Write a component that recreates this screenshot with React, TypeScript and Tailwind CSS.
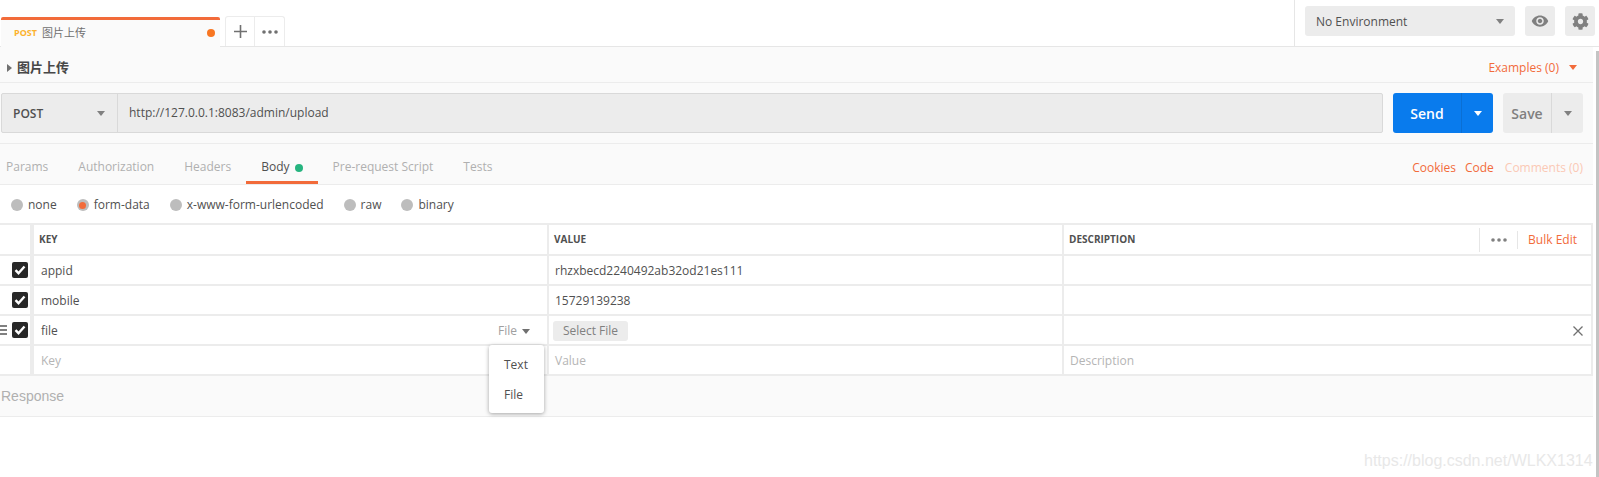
import { FaCog } from 'react-icons/fa';
import { MdVisibility } from 'react-icons/md';

const Caret = ({ className }: { className: string }) => (
  <svg className={className} width="8" height="5" viewBox="0 0 8 5">
    <path d="M0 0h8L4 5z" fill="currentColor" />
  </svg>
);

const Dots = ({ className }: { className: string }) => (
  <svg className={className} width="16" height="4" viewBox="0 0 16 4">
    <circle cx="2" cy="2" r="1.8" fill="currentColor" />
    <circle cx="8" cy="2" r="1.8" fill="currentColor" />
    <circle cx="14" cy="2" r="1.8" fill="currentColor" />
  </svg>
);

const CheckBox = () => (
  <div className="w-4 h-4 rounded-[2px] bg-[#282828] flex items-center justify-center">
    <svg width="12" height="10" viewBox="0 0 12 10">
      <path d="M1.5 5.2 4.5 8.2 10.5 1.5" fill="none" stroke="#fff" strokeWidth="2.4" />
    </svg>
  </div>
);

const Row = ({
  check,
  handle,
  keyCell,
  valueCell,
  descCell
}: {
  check?: boolean;
  handle?: boolean;
  keyCell: React.ReactNode;
  valueCell: React.ReactNode;
  descCell?: React.ReactNode;
}) => (
  <div className="flex h-[30px] border-b-2 border-[#ececec]">
    <div className="w-[30px] flex items-center">
      <div className="w-3 shrink-0">
        {handle && (
          <div className="w-[7px] flex flex-col gap-[2px]">
            <div className="h-[2px] bg-[#808080]" />
            <div className="h-[2px] bg-[#808080]" />
            <div className="h-[2px] bg-[#808080]" />
          </div>
        )}
      </div>
      {check && <CheckBox />}
    </div>
    <div className="w-[519px] border-l-4 border-r-2 border-[#ececec] pl-[7px] pt-[2px] flex items-center relative">{keyCell}</div>
    <div className="w-[515px] border-r-2 border-[#ececec] pl-[6px] pt-[2px] flex items-center">{valueCell}</div>
    <div className="w-[529px] border-r-2 border-[#ececec] pl-[6px] pt-[2px] flex items-center">{descCell}</div>
  </div>
);

const Radio = ({ label, active }: { label: string; active?: boolean }) => (
  <div className="flex items-center gap-[5px]">
    <div className="w-3 h-3 rounded-full bg-[#bdbdbd] flex items-center justify-center">
      {active && <div className="w-[7px] h-[7px] rounded-full bg-[#f26b3a]" />}
    </div>
    <span>{label}</span>
  </div>
);

export default function App() {
  return (
    <div className="w-[1599px] h-[477px] bg-white overflow-hidden relative flex flex-col text-xs text-[#505050] font-['Open_Sans','Noto_Sans_CJK_SC',sans-serif]">
      {/* tab bar */}
      <div className="h-[47px] shrink-0 flex border-b border-[#e6e6e6]">
        <div className="flex-1 flex items-end pl-[1px]">
          <div className="w-[219px] h-[30px] -mb-[1px] bg-[#fafafa] border-t-[3px] border-[#f26b3a] flex items-center pl-[13px] pr-[5px] pb-[1px] rounded-t-[2px]">
            <span className="text-[9px] font-bold text-[#fcb22c] w-[28px]">POST</span>
            <span className="text-[11px] text-[#707070]">图片上传</span>
            <div className="ml-auto w-2 h-2 rounded-full bg-[#f87622]" />
          </div>
          <div className="ml-[5px] h-[30px] flex border border-b-0 border-[#ececec] rounded-t-[3px]">
            <div className="w-[29px] flex items-center justify-center border-r border-[#ececec]">
              <svg width="13" height="13" viewBox="0 0 13 13">
                <path d="M6.5 0v13M0 6.5h13" stroke="#707070" strokeWidth="1.6" />
              </svg>
            </div>
            <div className="w-[29px] flex items-center justify-center">
              <Dots className="text-[#707070]" />
            </div>
          </div>
        </div>
        <div className="w-[305px] border-l border-[#e6e6e6] flex items-start pt-[6px] pl-[10px] gap-[10px]">
          <div className="w-[210px] h-[30px] rounded-[3px] bg-[#ececec] flex items-center pl-[11px] pr-[11px] pt-[1px] justify-between">
            <span>No Environment</span>
            <Caret className="text-[#808080]" />
          </div>
          <div className="w-[30px] h-[30px] rounded-[3px] bg-[#ececec] flex items-center justify-center">
            <MdVisibility size={18} color="#808080" />
          </div>
          <div className="w-[30px] h-[30px] rounded-[3px] bg-[#ececec] flex items-center justify-center">
            <FaCog size={17} color="#808080" />
          </div>
        </div>
      </div>

      <div className="flex-1 flex min-h-0">
        <div className="w-[1593px] shrink-0 flex flex-col">
          {/* request name */}
          <div className="h-[36px] shrink-0 bg-[#fafafa] border-b border-[#ececec] flex items-center pl-[7px] pr-[16px] pt-[6px]">
            <svg width="5" height="8" viewBox="0 0 5 8" className="mr-[5px]">
              <path d="M0 0v8l5-4z" fill="#707070" />
            </svg>
            <span className="text-[13px] font-semibold text-[#484848]">图片上传</span>
            <span className="ml-auto text-[#f26b3a]">Examples (0)</span>
            <Caret className="ml-[10px] text-[#f26b3a]" />
          </div>

          {/* url bar */}
          <div className="h-[61px] shrink-0 bg-[#fafafa] border-b border-[#ececec] pt-[10px] pl-[1px] flex items-start">
            <div className="w-[1382px] h-10 bg-[#ececec] border border-[#d9d9d9] rounded-[2px] flex">
              <div className="w-[116px] shrink-0 border-r border-[#d9d9d9] flex items-center justify-between pl-[11px] pr-3">
                <span className="font-semibold pt-[2px]">POST</span>
                <Caret className="text-[#808080]" />
              </div>
              <div className="flex-1 flex items-center pl-[11px] text-[#505050]">http://127.0.0.1:8083/admin/upload</div>
            </div>
            <div className="ml-[10px] w-[100px] h-10 rounded-[3px] bg-[#097bed] text-white flex text-sm font-semibold">
              <div className="w-[69px] flex items-center justify-center pt-[2px] border-r border-[#0a6fd4]">Send</div>
              <div className="flex-1 flex items-center justify-center">
                <Caret className="text-white" />
              </div>
            </div>
            <div className="ml-[10px] w-[80px] h-10 rounded-[3px] bg-[#ececec] text-[#808080] flex text-sm font-semibold">
              <div className="w-[49px] flex items-center justify-center pt-[2px] border-r border-[#d9d9d9]">Save</div>
              <div className="flex-1 flex items-center justify-center">
                <Caret className="text-[#808080]" />
              </div>
            </div>
          </div>

          {/* request tabs */}
          <div className="h-[41px] shrink-0 bg-[#fafafa] border-b border-[#ececec] flex items-stretch pl-[6px] pr-[10px] text-[#b0b0b0]">
            <div className="flex gap-[30px]">
              <span className="pt-[15px]">Params</span>
              <span className="pt-[15px]">Authorization</span>
              <span className="pt-[15px]">Headers</span>
              <div className="-mx-[15px] px-[15px] pt-[15px] h-[40px] border-b-[3px] border-[#f26b3a] flex items-start gap-[5px] text-[#505050]">
                <span>Body</span>
                <div className="w-2 h-2 mt-[5px] rounded-full bg-[#26b47f]" />
              </div>
              <span className="pt-[15px]">Pre-request Script</span>
              <span className="pt-[15px]">Tests</span>
            </div>
            <div className="ml-auto flex pt-[16px] text-[#f26b3a]">
              <span>Cookies</span>
              <span className="ml-[9px]">Code</span>
              <span className="ml-[11px] text-[#fbc9b5]">Comments (0)</span>
            </div>
          </div>

          {/* body type */}
          <div className="h-[38px] shrink-0 flex items-center pl-[11px] pt-[2px] gap-[20px]">
            <Radio label="none" />
            <Radio label="form-data" active />
            <Radio label="x-www-form-urlencoded" />
            <Radio label="raw" />
            <Radio label="binary" />
          </div>

          {/* form table */}
          <div className="flex h-[33px] border-y-2 border-[#ececec] text-[10px] font-bold">
            <div className="w-[30px]" />
            <div className="w-[519px] border-l-4 border-r-2 border-[#ececec] pl-[5px] flex items-center">KEY</div>
            <div className="w-[515px] border-r-2 border-[#ececec] pl-[5px] flex items-center">VALUE</div>
            <div className="w-[529px] border-r-2 border-[#ececec] pl-[5px] flex items-center relative">
              DESCRIPTION
              <div className="ml-auto h-[24px] border-l border-[#e6e6e6] w-[38px] flex items-center justify-center">
                <Dots className="text-[#808080]" />
              </div>
              <div className="h-[18px] border-l border-[#e6e6e6] pl-[10px] pr-[14px] flex items-center text-xs font-normal text-[#f26b3a]">
                Bulk Edit
              </div>
            </div>
          </div>
          <Row check keyCell="appid" valueCell="rhzxbecd2240492ab32od21es111" />
          <Row check keyCell="mobile" valueCell="15729139238" />
          <Row
            check
            handle
            keyCell={
              <>
                file
                <span className="ml-auto text-[#a0a0a0]">File</span>
                <Caret className="ml-[5px] mr-[17px] text-[#707070]" />
                <div className="absolute left-[455px] top-[29px] z-10 w-[55px] h-[68px] py-1 bg-white rounded-[3px] shadow-[0_1px_4px_rgba(0,0,0,0.35)] flex flex-col">
                  <span className="h-[30px] flex items-center pl-[15px] pt-[2px]">Text</span>
                  <span className="h-[30px] flex items-center pl-[15px] pt-[2px]">File</span>
                </div>
              </>
            }
            valueCell={
              <div className="-ml-[2px] w-[75px] h-5 rounded-[3px] bg-[#ececec] text-[#808080] flex items-center justify-center">
                Select File
              </div>
            }
            descCell={
              <svg className="ml-auto mr-[8px]" width="10" height="10" viewBox="0 0 10 10">
                <path d="M0.5 0.5l9 9M9.5 0.5l-9 9" stroke="#707070" strokeWidth="1.3" />
              </svg>
            }
          />
          <Row
            keyCell={<span className="text-[#b5b5b5]">Key</span>}
            valueCell={<span className="text-[#b5b5b5]">Value</span>}
            descCell={<span className="text-[#b5b5b5]">Description</span>}
          />

          {/* response */}
          <div className="h-[41px] shrink-0 bg-[#fafafa] border-b border-[#ececec] flex items-center pl-[1px] text-sm text-[#b0b0b0] font-['Liberation_Sans',sans-serif]">
            Response
          </div>
        </div>
        <div className="ml-[3px] mt-[4px] w-[3px] bg-[#c4c4c4]" />
      </div>

      <div className="absolute left-[1364px] top-[449px] text-base text-[#e8e8e8] font-['Liberation_Sans',sans-serif]">
        https://blog.csdn.net/WLKX1314
      </div>
    </div>
  );
}
